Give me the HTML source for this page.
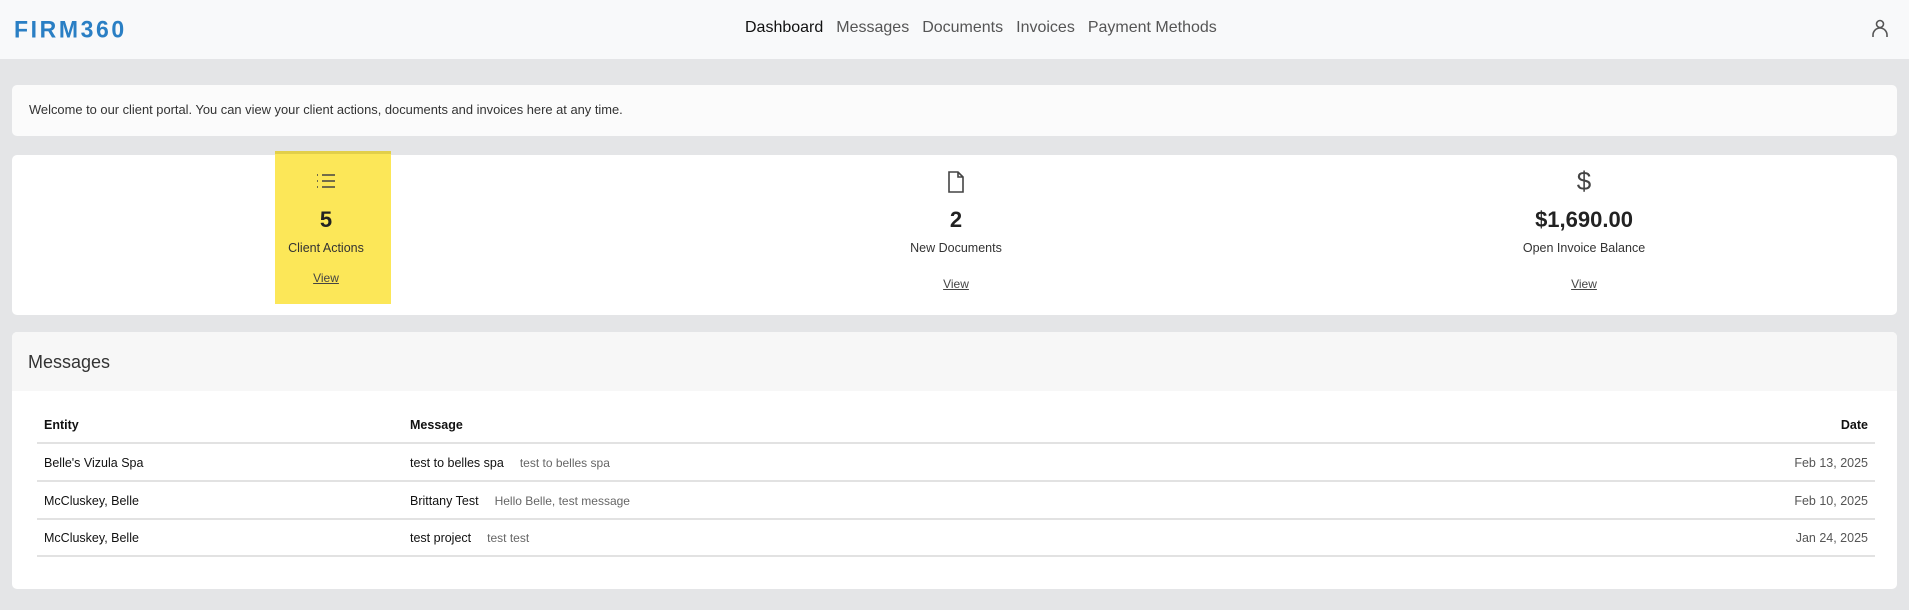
<!DOCTYPE html>
<html><head><meta charset="utf-8"><style>
*{box-sizing:border-box;margin:0;padding:0}
body{width:1909px;height:610px;background:#e4e5e7;font-family:"Liberation Sans",sans-serif;position:relative;overflow:hidden;color:#222}
.nav{position:absolute;left:0;top:0;width:1909px;height:59px;background:#f8f9fa}
.logo{position:absolute;left:14px;top:16px;font-size:23px;font-weight:bold;color:#2a7fc4;letter-spacing:2.6px;transform:scaleY(1.05)}
.links{position:absolute;left:745px;top:19px;font-size:16px;color:#555}
.links span{margin-right:13px}
.card{position:absolute;background:#fff;border-radius:5px}
.c{position:absolute;text-align:center;transform:translateX(-50%)}
.v{text-decoration:underline;font-size:12px;color:#444}
.row{position:absolute;left:37px;width:1838px;border-bottom:2px solid #e2e2e2;height:1px}
.t{position:absolute;font-size:12.5px;color:#111}
.g{color:#666;margin-left:16px;font-size:12px}
</style></head><body>
<div class="nav">
<div class="logo">FIRM360</div>
<div class="links"><span style="color:#111">Dashboard</span><span>Messages</span><span>Documents</span><span>Invoices</span><span>Payment Methods</span></div>
<svg style="position:absolute;left:1870px;top:18px" width="20" height="20" viewBox="0 0 20 20" fill="none" stroke="#555" stroke-width="1.6"><circle cx="10" cy="6" r="3.5"/><path d="M3 19v-2a7 7 0 0 1 14 0v2"/></svg>
</div>
<div class="card" style="left:12px;top:85px;width:1885px;height:51px;background:#fbfbfb"><div style="position:absolute;left:17px;top:17px;font-size:12.9px;color:#333">Welcome to our client portal. You can view your client actions, documents and invoices here at any time.</div></div>
<div class="card" style="left:12px;top:155px;width:1885px;height:160px"></div>
<div style="position:absolute;left:275px;top:151px;width:116px;height:153px;background:#fce758;border-top:3px solid #e2cf4a"></div>
<svg style="position:absolute;left:316px;top:173px" width="20" height="16" viewBox="0 0 20 16" stroke="#444" stroke-width="1.6"><path d="M1 2h1M1 8h1M1 14h1M6 2h13M6 8h13M6 14h13"/></svg>
<svg style="position:absolute;left:946px;top:171px" width="20" height="22" viewBox="0 0 20 22" fill="none" stroke="#444" stroke-width="1.6"><path d="M3 1h9l5 5v15H3z M12 1v5h5"/></svg>
<div class="c" style="left:1584px;top:166px;font-size:26px;color:#444">$</div>
<div class="c" style="left:326px;top:207px;font-size:22px;font-weight:bold">5</div>
<div class="c" style="left:956px;top:207px;font-size:22px;font-weight:bold">2</div>
<div class="c" style="left:1584px;top:207px;font-size:22px;font-weight:bold">$1,690.00</div>
<div class="c" style="left:326px;top:241px;font-size:12.5px;color:#333">Client Actions</div>
<div class="c" style="left:956px;top:241px;font-size:12.5px;color:#333">New Documents</div>
<div class="c" style="left:1584px;top:241px;font-size:12.5px;color:#333">Open Invoice Balance</div>
<div class="c v" style="left:326px;top:271px">View</div>
<div class="c v" style="left:956px;top:277px">View</div>
<div class="c v" style="left:1584px;top:277px">View</div>
<div class="card" style="left:12px;top:332px;width:1885px;height:257px;overflow:hidden"><div style="height:59px;background:#f7f7f7"></div><div style="position:absolute;left:16px;top:20px;font-size:18px;color:#333">Messages</div></div>
<div class="t" style="left:44px;top:418px;font-weight:bold">Entity</div>
<div class="t" style="left:410px;top:418px;font-weight:bold">Message</div>
<div class="t" style="right:41px;top:418px;font-weight:bold">Date</div>
<div class="row" style="top:442px"></div>
<div class="t" style="left:44px;top:456px">Belle's Vizula Spa</div>
<div class="t" style="left:410px;top:456px">test to belles spa<span class="g">test to belles spa</span></div>
<div class="t" style="right:41px;top:456px;color:#555">Feb 13, 2025</div>
<div class="row" style="top:480px"></div>
<div class="t" style="left:44px;top:494px">McCluskey, Belle</div>
<div class="t" style="left:410px;top:494px">Brittany Test<span class="g">Hello Belle, test message</span></div>
<div class="t" style="right:41px;top:494px;color:#555">Feb 10, 2025</div>
<div class="row" style="top:518px"></div>
<div class="t" style="left:44px;top:531px">McCluskey, Belle</div>
<div class="t" style="left:410px;top:531px">test project<span class="g">test test</span></div>
<div class="t" style="right:41px;top:531px;color:#555">Jan 24, 2025</div>
<div class="row" style="top:555px"></div>
</body></html>
